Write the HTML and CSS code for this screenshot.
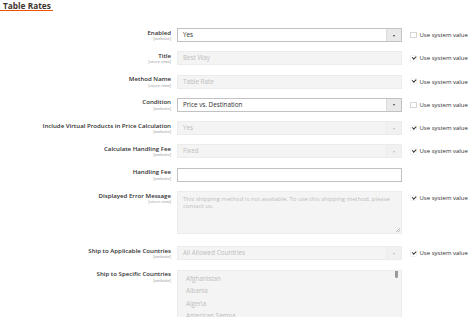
FILE: index.html
```html
<!DOCTYPE html>
<html lang="en">
<head>
    <meta charset="UTF-8">
    <title>Table Rates</title>
    <link rel="stylesheet" href="styles.css">
</head>
<body>

    <div class="section">
        <div class="section-title">Table Rates</div>

        <div class="fields">
            <div class="field">
                <div class="label"><b>Enabled</b><small>[website]</small></div>
                <div class="control select"><span>Yes</span><i class="arrow"></i></div>
                <label class="use-default"><span class="check"></span>Use system value</label>
            </div>

            <div class="field">
                <div class="label"><b>Title</b><small>[store view]</small></div>
                <div class="control disabled"><span>Best Way</span></div>
                <label class="use-default"><span class="check checked"></span>Use system value</label>
            </div>

            <div class="field">
                <div class="label"><b>Method Name</b><small>[store view]</small></div>
                <div class="control disabled"><span>Table Rate</span></div>
                <label class="use-default"><span class="check checked"></span>Use system value</label>
            </div>

            <div class="field">
                <div class="label"><b>Condition</b><small>[website]</small></div>
                <div class="control select"><span>Price vs. Destination</span><i class="arrow"></i></div>
                <label class="use-default"><span class="check"></span>Use system value</label>
            </div>

            <div class="field">
                <div class="label"><b>Include Virtual Products in Price Calculation</b><small>[website]</small></div>
                <div class="control select disabled"><span>Yes</span><i class="arrow"></i></div>
                <label class="use-default"><span class="check checked"></span>Use system value</label>
            </div>

            <div class="field">
                <div class="label"><b>Calculate Handling Fee</b><small>[website]</small></div>
                <div class="control select disabled"><span>Fixed</span><i class="arrow"></i></div>
                <label class="use-default"><span class="check checked"></span>Use system value</label>
            </div>

            <div class="field">
                <div class="label"><b>Handling Fee</b><small>[website]</small></div>
                <div class="control"><span></span></div>
            </div>

            <div class="field">
                <div class="label"><b>Displayed Error Message</b><small>[store view]</small></div>
                <div class="control textarea disabled">
                    <span>This shipping method is not available. To use this shipping method, please contact us.</span>
                    <i class="grip"></i>
                </div>
                <label class="use-default"><span class="check checked"></span>Use system value</label>
            </div>

            <div class="field wide-gap">
                <div class="label"><b>Ship to Applicable Countries</b><small>[website]</small></div>
                <div class="control select disabled"><span>All Allowed Countries</span><i class="arrow"></i></div>
                <label class="use-default"><span class="check checked"></span>Use system value</label>
            </div>

            <div class="field">
                <div class="label"><b>Ship to Specific Countries</b><small>[website]</small></div>
                <div class="control multiselect disabled">
                    <ul>
                        <li>Afghanistan</li>
                        <li>Albania</li>
                        <li>Algeria</li>
                        <li>American Samoa</li>
                    </ul>
                    <i class="thumb"></i>
                </div>
            </div>
        </div>
    </div>

</body>
</html>
```

FILE: styles.css
```css
* { margin: 0; padding: 0; box-sizing: border-box; }

body {
    font-family: 'Open Sans', 'Noto Sans', sans-serif;
    color: #303030;
    background: #fff;
    width: 474px;
    height: 317px;
    overflow: hidden;
}

.section-title {
    width: 53px;
    height: 11px;
    padding: 1px 0 0 3px;
    border-bottom: 1px solid #eb5202;
    font-size: 8.3px;
    font-weight: 700;
    line-height: 9px;
    color: #41362f;
    white-space: nowrap;
}

.fields { padding-top: 17px; }

.field {
    display: grid;
    grid-template-columns: 171px 225px 1fr;
    column-gap: 6px;
    align-items: start;
    margin-bottom: 9.3px;
}
.field.wide-gap { padding-top: 3px; }

/* labels */
.label {
    text-align: right;
    padding-top: 0.5px;
}
.label b {
    display: block;
    font-size: 6.1px;
    font-weight: 600;
    line-height: 7.5px;
    color: #303030;
}
.label small {
    display: block;
    font-size: 4.2px;
    line-height: 5px;
    color: #999;
}

/* controls */
.control {
    position: relative;
    height: 14px;
    border: 1px solid #c2c2c2;
    background: #fff;
    font-size: 6.3px;
    line-height: 12px;
    padding: 0 5px;
    color: #303030;
    white-space: nowrap;
    overflow: hidden;
}
.control.disabled {
    background: #f4f4f4;
    border-color: #ececec;
    color: #bdbdbd;
}

.select { padding-right: 20px; }
.select .arrow {
    position: absolute;
    top: 0; right: 0; bottom: 0;
    width: 15px;
    background: #e9e9e9;
    border-left: 1px solid #dcdcdc;
}
.select .arrow::after {
    content: '';
    position: absolute;
    left: 6px; top: 5.5px;
    border-left: 1.5px solid transparent;
    border-right: 1.5px solid transparent;
    border-top: 2px solid #444;
}
.select.disabled .arrow {
    background: #f1f1f1;
    border-left-color: #ececec;
}
.select.disabled .arrow::after { border-top-color: #bbb; }

.textarea {
    height: 43px;
    white-space: normal;
    font-size: 6px;
    line-height: 7px;
    padding: 4px 3px 0 5px;
}
.textarea .grip {
    position: absolute;
    right: 1px; bottom: 1px;
    width: 4px; height: 4px;
    background: linear-gradient(135deg, transparent 45%, #bbb 50%, transparent 60%, transparent 70%, #bbb 75%, transparent 85%);
}

.multiselect {
    height: 60px;
    padding: 2px 8px 0;
    line-height: 12.5px;
}
.multiselect ul { list-style: none; }
.multiselect .thumb {
    position: absolute;
    right: 3px; top: -1px;
    width: 3px; height: 8px;
    border-radius: 1.5px;
    background: #9a9a9a;
}

/* use system value */
.use-default {
    display: flex;
    align-items: center;
    gap: 3px;
    height: 14px;
    margin-left: 2px;
    font-size: 6px;
    color: #303030;
    white-space: nowrap;
}
.check {
    position: relative;
    width: 6.5px;
    height: 6.5px;
    border: 1px solid #d6d6d6;
    background: #fff;
    flex-shrink: 0;
}
.check.checked { border-color: #f3f3f3; }
.check.checked::after {
    content: '';
    position: absolute;
    left: 1px; top: 0;
    width: 2.5px; height: 1.5px;
    border-left: 1px solid #333;
    border-bottom: 1px solid #333;
    transform: rotate(-45deg);
}
```
